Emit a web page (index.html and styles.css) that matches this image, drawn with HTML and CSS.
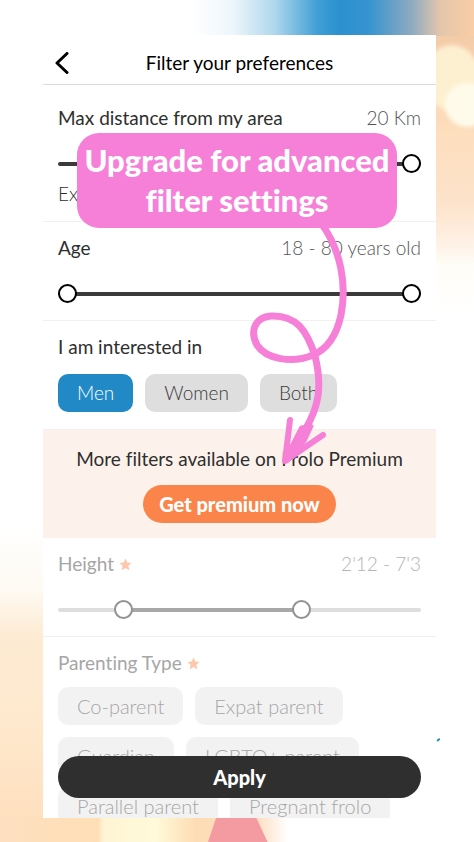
FILE: index.html
```html
<!DOCTYPE html>
<html lang="en">
<head>
<meta charset="utf-8">
<meta name="viewport" content="width=device-width, initial-scale=1">
<title>Filter your preferences</title>
<link rel="stylesheet" href="styles.css">
</head>
<body>
<svg class="backdrop" viewBox="0 0 474 842" preserveAspectRatio="none" aria-hidden="true">
  <defs>
    <filter id="crisp" x="-50%" y="-50%" width="200%" height="200%"><feGaussianBlur stdDeviation="2"/></filter>
    <linearGradient id="sky" x1="0" x2="1" y1="0" y2="0">
      <stop offset="0" stop-color="#ffffff"/>
      <stop offset="0.15" stop-color="#eef6fb"/>
      <stop offset="0.3" stop-color="#aed6ec"/>
      <stop offset="0.45" stop-color="#3f9fd5"/>
      <stop offset="0.53" stop-color="#2b90cf"/>
      <stop offset="0.63" stop-color="#3694d0"/>
      <stop offset="0.78" stop-color="#8dabc0"/>
      <stop offset="0.88" stop-color="#e4c6ab"/>
      <stop offset="1" stop-color="#f9cda6"/>
    </linearGradient>
    <linearGradient id="peach" x1="0" x2="0" y1="0" y2="1">
      <stop offset="0" stop-color="#f4cba9"/>
      <stop offset="0.35" stop-color="#fddebd"/>
      <stop offset="0.6" stop-color="#fde3cb"/>
      <stop offset="0.76" stop-color="#fef3e8"/>
      <stop offset="0.82" stop-color="#fffdf7"/>
      <stop offset="1" stop-color="#ffffff"/>
    </linearGradient>
    <linearGradient id="sand" x1="0" x2="0" y1="0" y2="1">
      <stop offset="0" stop-color="#ffffff"/>
      <stop offset="0.2" stop-color="#fefaf3"/>
      <stop offset="0.35" stop-color="#fdebd3"/>
      <stop offset="0.6" stop-color="#fee9ce"/>
      <stop offset="1" stop-color="#fedebb"/>
    </linearGradient>
    <linearGradient id="floor" x1="0" x2="1" y1="0" y2="0">
      <stop offset="0" stop-color="#fedfc0"/>
      <stop offset="0.34" stop-color="#fedfb5"/>
      <stop offset="0.36" stop-color="#fff4d4"/>
      <stop offset="0.54" stop-color="#fffad9"/>
      <stop offset="0.68" stop-color="#fddcb4"/>
      <stop offset="0.9" stop-color="#fde0c4"/>
      <stop offset="1" stop-color="#ffffff"/>
    </linearGradient>
  </defs>
  <rect width="474" height="842" fill="#fff"/>
  <rect x="190" width="284" height="36" fill="url(#sky)"/>
  <rect x="434" y="36" width="40" height="279" fill="url(#peach)"/>
  <ellipse cx="452" cy="78" rx="28" ry="33" fill="#fdf0d0" filter="url(#crisp)"/>
  <circle cx="467" cy="105" r="22" fill="#fffbea" filter="url(#crisp)"/>
  <rect y="525" width="44" height="317" fill="url(#sand)"/>
  <rect y="816" width="288" height="26" fill="url(#floor)"/>
  <path d="M217 815h38l14 30h-62z" fill="#f49ba2"/>
  <path d="M437 741q1-3 3-2-1 2-3 2z" fill="#1b87b8" stroke="#1b87b8"/>
</svg>
<div class="stage">
  <main class="phone">
    <header class="topbar">
      <button class="back" type="button" aria-label="Back">
        <svg width="14" height="22" viewBox="0 0 14 22" aria-hidden="true"><path d="M12 1.500L2 11l10 9.500"/></svg>
      </button>
      <h1>Filter your preferences</h1>
    </header>

    <form class="filters">
      <section class="group">
        <div class="row"><label for="distance">Max distance from my area</label><output>20 Km</output></div>
        <div class="slider"><span class="track"></span><input id="distance" type="range" min="0" max="20" value="20"></div>
        <p class="note">Expand distance if no results found</p>
      </section>

      <section class="group">
        <div class="row"><label for="age-min">Age</label><output>18 - 80 years old</output></div>
        <div class="slider">
          <span class="track"></span>
          <input id="age-min" type="range" min="18" max="80" value="18">
          <input type="range" min="18" max="80" value="80" aria-label="Maximum age">
        </div>
      </section>

      <section class="group">
        <h2>I am interested in</h2>
        <div class="chips">
          <button class="chip chosen" type="button">Men</button>
          <button class="chip" type="button">Women</button>
          <button class="chip" type="button">Both</button>
        </div>
      </section>

      <section class="premium">
        <p>More filters available on Frolo Premium</p>
        <button type="button">Get premium now</button>
      </section>

      <section class="group locked">
        <div class="row">
          <label for="height-min">Height <svg class="star" viewBox="0 0 24 24" aria-hidden="true"><path d="M12 1l3.300 7.300 7.900.8-5.900 5.400 1.700 7.900-7-4.100-7 4.100 1.700-7.900L.8 9.100l7.900-.8z"/></svg></label>
          <output>2'12 - 7'3</output>
        </div>
        <div class="slider">
          <span class="track pale"></span><span class="track span"></span>
          <input id="height-min" type="range" min="0" max="1000" value="164">
          <input type="range" min="0" max="1000" value="679" aria-label="Maximum height">
        </div>
      </section>

      <section class="group locked">
        <h2>Parenting Type <svg class="star" viewBox="0 0 24 24" aria-hidden="true"><path d="M12 1l3.300 7.300 7.900.8-5.900 5.400 1.700 7.900-7-4.100-7 4.100 1.700-7.900L.8 9.100l7.900-.8z"/></svg></h2>
        <div class="chips">
          <button class="chip" type="button">Co-parent</button>
          <button class="chip" type="button">Expat parent</button>
          <button class="chip" type="button">Guardian</button>
          <button class="chip" type="button">LGBTQ+ parent</button>
          <button class="chip" type="button">Parallel parent</button>
          <button class="chip" type="button">Pregnant frolo</button>
        </div>
      </section>
    </form>

    <button class="apply" type="button">Apply</button>

    <svg class="arrow" width="110" height="250" viewBox="245 220 110 250" aria-hidden="true">
      <path d="M321 223C341 250 347 285 341 315C336 338 325 350 313 355C292 364 266 359 257 345C249 330 256 317 271 316C297 315 307 331 315 356C323 388 318 408 305 430L288 458" stroke-width="7"/>
      <path d="M290 420L285 461L323 435" stroke-width="6"/>
      <path d="M301 427L312 426L305 441L288 461L285 458z" stroke-width="3" class="head"/>
    </svg>
    <p class="bubble">Upgrade for advanced filter settings</p>
  </main>
</div>
</body>
</html>
```
FILE: styles.css
```css
* {
  box-sizing: border-box;
}

body,
h1,
h2,
p {
  margin: 0;
}

body {
  font-family: Lato, "Liberation Sans", sans-serif;
  font-size: 19px;
  font-variant-ligatures: none;
  line-height: 24px;
  color: #2e2e2e;
}

button {
  font: inherit;
  font-variant-ligatures: none;
  border: 0;
  cursor: pointer;
}

.backdrop {
  position: fixed;
  inset: 0;
  width: 100%;
  height: 100%;
  z-index: -1;
}

.stage {
  display: flex;
  height: 100vh;
  padding: 35px 38px 24px 43px;
}

.phone {
  position: relative;
  flex: 1;
  min-width: 0;
  overflow: hidden;
  background: #fff;
}

.topbar {
  display: grid;
  grid-template-columns: 32px 1fr 32px;
  align-items: center;
  height: 50px;
  padding: 6px 8px 0;
  border-bottom: 1px solid #dcdcdc;
}

.back {
  display: flex;
  padding: 4px;
  background: none;
}

.back path {
  fill: none;
  stroke: #000;
  stroke-width: 3;
  stroke-linecap: round;
  stroke-linejoin: round;
}

h1 {
  font-size: 19px;
  font-weight: 400;
  text-align: center;
  color: #000;
}

h2 {
  font-size: 19px;
  font-weight: 400;
}

.group {
  padding: 14px 15px 17px;
  border-bottom: 1px solid #f0f0f0;
}

.group:first-child {
  padding-top: 21px;
  padding-bottom: 15px;
}

.row {
  display: flex;
  justify-content: space-between;
}

output {
  font-weight: 300;
  color: #555;
}

.slider {
  display: grid;
  align-items: center;
  height: 19px;
  margin-top: 24px;
}

.slider > * {
  grid-area: 1 / 1;
}

.track {
  height: 4px;
  border-radius: 2px;
  background: #3a3a3a;
}

.pale {
  background: #bdbdbd;
}

.span {
  margin: 0 31% 0 18%;
}

input[type="range"] {
  appearance: none;
  width: 100%;
  height: 19px;
  margin: 0;
  background: none;
  pointer-events: none;
}

input[type="range"]::-webkit-slider-thumb {
  appearance: none;
  width: 19px;
  height: 19px;
  border: 2px solid #000;
  border-radius: 50%;
  background: #fff;
  pointer-events: auto;
}

.note {
  margin-top: 9px;
  font-weight: 300;
}

.chips {
  display: flex;
  flex-wrap: wrap;
  gap: 12px;
  margin-top: 15px;
}

.chip {
  height: 38px;
  padding: 0 19px;
  border-radius: 10px;
  background: #dedede;
  color: #3a3a3a;
  font-weight: 300;
}

.chosen {
  background: #2089c6;
  color: #fff;
}

.premium {
  display: flex;
  flex-direction: column;
  align-items: center;
  gap: 14px;
  padding: 17px 8px 15px;
  background: #fdf2eb;
  white-space: nowrap;
}

.premium button {
  height: 38px;
  padding: 0 16px;
  border-radius: 19px;
  background: #fb844a;
  color: #fff;
  font-size: 20px;
  font-weight: 900;
}

.locked {
  color: #a6a6a6;
}

.locked output {
  color: #b4b4b4;
}

.locked .chips {
  margin-top: 12px;
}

.locked .chip {
  background: #f2f2f2;
  color: #a6a6a6;
  font-size: 20px;
}

.locked .pale {
  background: #dedede;
}

.locked .span {
  background: #a8a8a8;
}

.locked input[type="range"]::-webkit-slider-thumb {
  border-color: #929292;
}

.star {
  width: 13px;
  height: 13px;
  fill: #fbc8ab;
}

.apply {
  position: absolute;
  right: 15px;
  bottom: 20px;
  left: 15px;
  height: 42px;
  border-radius: 21px;
  background: #2f2f2f;
  color: #fff;
  font-size: 20px;
  font-weight: 900;
}

.bubble {
  position: absolute;
  top: 98px;
  right: 39px;
  left: 34px;
  padding: 7px 0 8px;
  border-radius: 22px;
  background: #f67fd8;
  color: #fff;
  font-size: 31px;
  font-weight: 900;
  line-height: 40px;
  text-align: center;
}

.arrow {
  position: absolute;
  top: 185px;
  right: 81px;
  fill: none;
  stroke: #f67fd8;
  stroke-linecap: round;
  stroke-linejoin: round;
}

.head {
  fill: #f67fd8;
}
```
